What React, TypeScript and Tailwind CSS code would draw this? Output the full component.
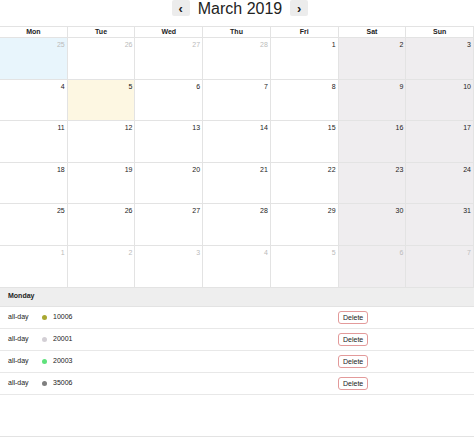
const days = ["Mon", "Tue", "Wed", "Thu", "Fri", "Sat", "Sun"]

const weeks: { d: number; other?: boolean }[][] = [
    [{ d: 25, other: true }, { d: 26, other: true }, { d: 27, other: true }, { d: 28, other: true }, { d: 1 }, { d: 2 }, { d: 3 }],
    [{ d: 4 }, { d: 5 }, { d: 6 }, { d: 7 }, { d: 8 }, { d: 9 }, { d: 10 }],
    [{ d: 11 }, { d: 12 }, { d: 13 }, { d: 14 }, { d: 15 }, { d: 16 }, { d: 17 }],
    [{ d: 18 }, { d: 19 }, { d: 20 }, { d: 21 }, { d: 22 }, { d: 23 }, { d: 24 }],
    [{ d: 25 }, { d: 26 }, { d: 27 }, { d: 28 }, { d: 29 }, { d: 30 }, { d: 31 }],
    [{ d: 1, other: true }, { d: 2, other: true }, { d: 3, other: true }, { d: 4, other: true }, { d: 5, other: true }, { d: 6, other: true }, { d: 7, other: true }],
]

const events = [
    { id: "10006", dot: "bg-[#a9a832]" },
    { id: "20001", dot: "bg-[#d3cfd5]" },
    { id: "20003", dot: "bg-[#5fe27c]" },
    { id: "35006", dot: "bg-[#7f7f7f]" },
]

const App = () => {
    return (
        <div className="w-[474px] h-[437px] bg-white text-[#222] font-['Liberation_Sans',Arial,sans-serif] overflow-hidden">
            <div className="h-[26px] flex items-start justify-center gap-[8px] pl-[6px]">
                <button className="w-[18px] h-[16px] bg-[#ececec] rounded-[2px] flex items-center justify-center text-[13px] font-bold leading-none">
                    ‹
                </button>
                <h1 className="text-[16px] leading-[18px] text-[#222]">March 2019</h1>
                <button className="w-[18px] h-[16px] bg-[#ececec] rounded-[2px] flex items-center justify-center text-[13px] font-bold leading-none">
                    ›
                </button>
            </div>

            <div className="grid grid-cols-7 border-t border-[#e3e3e3]">
                {days.map((day) => (
                    <div key={day} className="h-[10px] border-r border-[#e3e3e3] text-[7px] leading-[10px] font-bold text-center">
                        {day}
                    </div>
                ))}
            </div>

            {weeks.map((week, wi) => (
                <div key={wi} className="grid grid-cols-7 h-[41.6px] border-t border-[#e3e3e3]">
                    {week.map((c, ci) => {
                        const weekend = ci >= 5
                        const first = wi === 0 && ci === 0
                        const today = wi === 1 && ci === 1
                        const bg = first
                            ? "bg-[#e8f5fc]"
                            : today
                              ? "bg-[#fdf7e2]"
                              : weekend
                                ? "bg-[#efedef]"
                                : "bg-white"
                        return (
                            <div
                                key={ci}
                                className={`${bg} border-r border-[#e3e3e3] text-[7px] leading-none text-right pr-[2px] pt-[3px] ${c.other ? "text-[#bbb]" : "text-[#222]"}`}>
                                {c.d}
                            </div>
                        )
                    })}
                </div>
            ))}

            <div className="border-t border-[#e3e3e3] h-[150px] border-b">
                <div className="h-[19px] bg-[#eeeeee] flex items-center px-[8px] text-[7px] font-bold border-b border-[#e3e3e3]">
                    Monday
                </div>
                {events.map((ev) => (
                    <div key={ev.id} className="h-[22px] flex items-center border-b border-[#e8e8e8] text-[7px]">
                        <span className="w-[42px] pl-[8px]">all-day</span>
                        <span className={`w-[5px] h-[5px] rounded-full ${ev.dot}`} />
                        <span className="ml-[6px] w-[285px]">{ev.id}</span>
                        <button className="h-[13px] px-[4px] border border-[#e39a9a] rounded-[3px] text-[7px] leading-none bg-white">
                            Delete
                        </button>
                    </div>
                ))}
            </div>
        </div>
    )
}

export default App
